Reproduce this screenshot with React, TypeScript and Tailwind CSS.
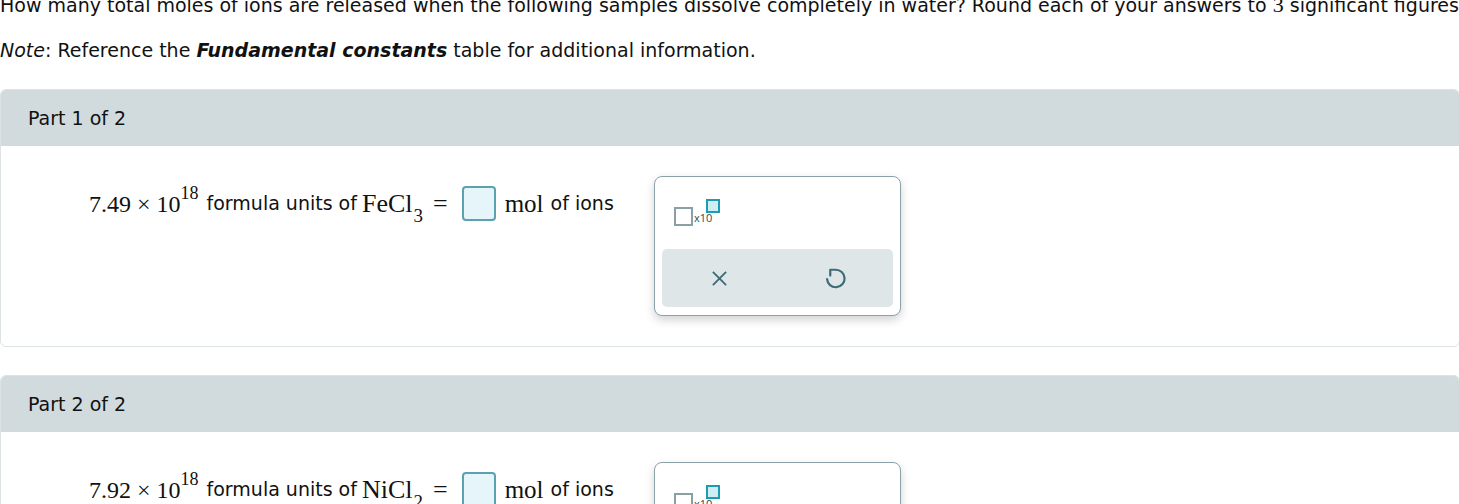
import React from "react";

const sans = { fontFamily: '"DejaVu Sans", Verdana, sans-serif' };
const serif = { fontFamily: '"Liberation Serif", "Times New Roman", serif' };

function X10() {
  return (
    <div className="relative w-[48px] h-[28px]">
      <div className="absolute left-0 top-[9px] w-[19px] h-[19px] border-2 border-[#8a9fa6]" />
      <span className="absolute left-[20px] top-[14px] text-[11px] leading-none text-[#2f4a54]" style={{ fontFamily: '"Open Sans", sans-serif' }}>
        x10
      </span>
      <div className="absolute left-[32px] top-[1px] w-[14px] h-[14px] border-2 border-[#1f9bb1] bg-[#cfeef4]" />
    </div>
  );
}

function Popup() {
  return (
    <div className="w-[247px] h-[140px] border border-[#8aa1a9] rounded-[8px] bg-white shadow-[0_4px_10px_rgba(0,0,0,0.18)] flex flex-col">
      <div className="pl-[19px] pt-[21px] h-[72px]">
        <X10 />
      </div>
      <div className="mx-[7px] h-[58px] rounded-[5px] bg-[#dfe6e8] flex items-center">
        <div className="w-1/2 flex justify-center">
          <svg width="17" height="17" viewBox="0 0 18 18" fill="none" stroke="#3f6b78" strokeWidth="2" strokeLinecap="butt">
            <path d="M2 2 L16 16 M16 2 L2 16" />
          </svg>
        </div>
        <div className="w-1/2 flex justify-center">
          <svg width="21" height="21" viewBox="3 4 18 18" fill="none" stroke="#3f6b78" strokeWidth="1.9" strokeLinecap="round" strokeLinejoin="round">
            <path d="M7.5 10.5 V5.5 H12 A7.5 7.5 0 1 1 4.8 13.5" />
          </svg>
        </div>
      </div>
    </div>
  );
}

function Part({ n, num, formula, sub }: { n: number; num: string; formula: string; sub: string }) {
  return (
    <div className="border border-[#dde2e4] rounded-[6px] w-[1460px] overflow-hidden">
      <div className="h-[56px] bg-[#d1dadd] flex items-center pl-[27px] text-[19px] text-[#111]" style={sans}>
        Part {n} of 2
      </div>
      <div className="flex items-start pt-[30px] pb-[30px]">
        <div className="w-[653px] pl-[88px] mt-[10px] h-[35px] flex items-center text-[#111] whitespace-nowrap">
          <span className="text-[24px]" style={serif}>
            {num} <span>×</span> 10
            <span className="text-[18px] relative -top-[13px]">18</span>
          </span>
          <span className="text-[19px] ml-[8px]" style={sans}>formula units of</span>
          <span className="text-[26px] ml-[5px]" style={serif}>
            {formula}
            <span className="text-[19px] relative top-[10px] ml-[1px]">{sub}</span>
          </span>
          <span className="text-[26px] ml-[10px] mr-[14px]" style={serif}>=</span>
          <div className="w-[34px] h-[35px] shrink-0 border-2 border-[#5aa2b0] rounded-[4px] bg-[#e6f5f9]" />
          <span className="text-[25px] ml-[9px]" style={serif}>mol</span>
          <span className="text-[19px] ml-[7px]" style={sans}>of ions</span>
        </div>
        <Popup />
      </div>
    </div>
  );
}

export default function App() {
  return (
    <div className="w-[1459px] h-[504px] overflow-hidden bg-white text-[#111]" style={sans}>
      <div className="-mt-[7px] text-[19px] leading-[24px] whitespace-nowrap">
        How many total moles of ions are released when the following samples dissolve completely in water? Round each of your answers to <span className="text-[22px]" style={serif}>3</span> significant figures.
      </div>
      <div className="mt-[21px] text-[19px] leading-[24px] whitespace-nowrap">
        <i>Note</i>: Reference the <b><i>Fundamental constants</i></b> table for additional information.
      </div>
      <div className="mt-[27px] flex flex-col gap-[28px]">
        <Part n={1} num="7.49" formula="FeCl" sub="3" />
        <Part n={2} num="7.92" formula="NiCl" sub="2" />
      </div>
    </div>
  );
}
